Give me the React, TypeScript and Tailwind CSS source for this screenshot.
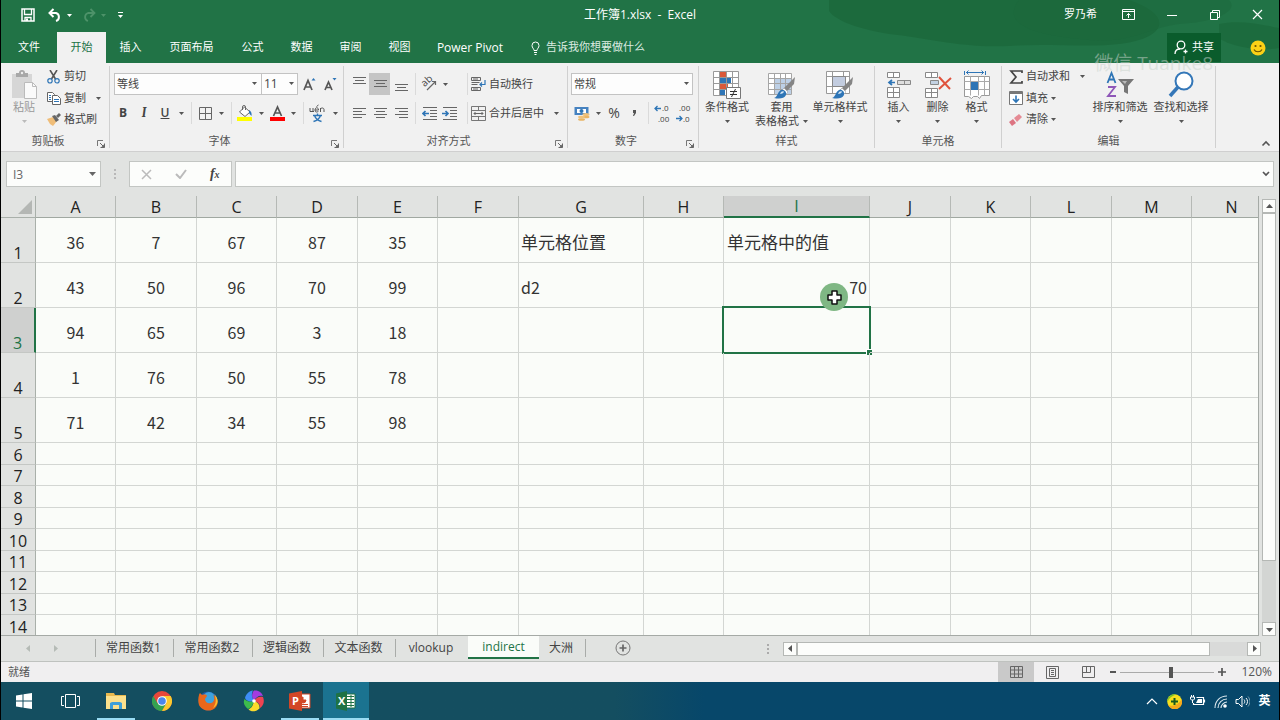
import type { ReactNode } from "react"
import clsx from "clsx"

const ribbonTabs = [
  { name: "文件", width: "w-[56px]" },
  { name: "开始", width: "w-[49px]", active: true },
  { name: "插入", width: "w-[49px]" },
  { name: "页面布局", width: "w-[73px]" },
  { name: "公式", width: "w-[49px]" },
  { name: "数据", width: "w-[49px]" },
  { name: "审阅", width: "w-[49px]" },
  { name: "视图", width: "w-[49px]" },
  { name: "Power Pivot", width: "w-[92px]" },
]

const columns = [
  { name: "A", width: "w-[80px]" },
  { name: "B", width: "w-[81px]" },
  { name: "C", width: "w-[80px]" },
  { name: "D", width: "w-[81px]" },
  { name: "E", width: "w-[80px]" },
  { name: "F", width: "w-[81px]" },
  { name: "G", width: "w-[125px]" },
  { name: "H", width: "w-[80px]" },
  { name: "I", width: "w-[146px]" },
  { name: "J", width: "w-[81px]" },
  { name: "K", width: "w-[80px]" },
  { name: "L", width: "w-[81px]" },
  { name: "M", width: "w-[80px]" },
  { name: "N", width: "" },
]

const data: Record<number, Record<string, string>> = {
  1: { A: "36", B: "7", C: "67", D: "87", E: "35", G: "单元格位置", I: "单元格中的值" },
  2: { A: "43", B: "50", C: "96", D: "70", E: "99", G: "d2", I: "70" },
  3: { A: "94", B: "65", C: "69", D: "3", E: "18" },
  4: { A: "1", B: "76", C: "50", D: "55", E: "78" },
  5: { A: "71", B: "42", C: "34", D: "55", E: "98" },
}

const rows = Array.from({ length: 14 }, (_, i) => i + 1)

const sheetTabs = [
  { name: "常用函数1", width: "w-[78px]" },
  { name: "常用函数2", width: "w-[79px]" },
  { name: "逻辑函数", width: "w-[71px]" },
  { name: "文本函数", width: "w-[72px]" },
  { name: "vlookup", width: "w-[73px]" },
  { name: "indirect", width: "w-[71px]", active: true },
  { name: "大洲", width: "w-[46px]" },
]

function Svg({ w, h, children, className }: { w: number; h: number; children: ReactNode; className?: string }) {
  return (
    <svg width={w} height={h} viewBox={`0 0 ${w} ${h}`} fill="none" className={clsx("shrink-0", className)} aria-hidden="true">
      {children}
    </svg>
  )
}

function Caret({ className = "text-[#555]" }: { className?: string }) {
  return (
    <Svg w={5} h={3} className={className}>
      <path d="M0 0h5L2.500 3z" fill="currentColor" />
    </Svg>
  )
}

function CaretButton({ label }: { label: string }) {
  return (
    <button aria-label={label} className="flex h-full w-3 items-center justify-center">
      <Caret />
    </button>
  )
}

function Tool({ label, width = "w-5", active, children }: { label: string; width?: string; active?: boolean; children: ReactNode }) {
  return (
    <button aria-label={label} className={clsx("flex h-full items-center justify-center", width, active && "bg-[#c5c5c5]")}>
      {children}
    </button>
  )
}

function Sep() {
  return <span className="mr-[3px] ml-1 h-full w-px bg-[#dadada]" />
}

function Row({ children, className }: { children: ReactNode; className?: string }) {
  return <div className={clsx("flex h-[22px] items-center", className)}>{children}</div>
}

function Group({ title, width, launcher, children }: { title: string; width: string; launcher?: boolean; children: ReactNode }) {
  return (
    <section className={clsx("flex shrink-0 flex-col border-r border-[#d0d0d0]", width)}>
      <div className="flex-1">{children}</div>
      <footer className="relative flex h-[14px] items-center justify-center text-[#555]">
        <span className={clsx(launcher && "pr-[14px]")}>{title}</span>
        {launcher && (
          <button aria-label={`${title}设置`} className="absolute right-1 bottom-0">
            <Svg w={8} h={8}>
              <path d="M.5 6V.5H6" stroke="#777" />
              <path d="M3 3l3 3M7.500 3.500v4h-4" stroke="#666" />
              <path d="M4 7.500L7.500 4v3.500z" fill="#666" />
            </Svg>
          </button>
        )}
      </footer>
    </section>
  )
}

function BigButton({ label, second, width, muted, icon }: { label: string; second?: string; width: string; muted?: boolean; icon: ReactNode }) {
  return (
    <button className={clsx("flex shrink-0 flex-col items-center pt-[3px] whitespace-nowrap", width, muted && "text-[#999]")}>
      <span className="flex h-[31px] items-center">{icon}</span>
      <span className="h-[14px] leading-[14px]">{label}</span>
      <span className="flex h-[14px] items-center gap-1 leading-[14px]">
        {second}
        <Caret className={muted ? "text-[#bbb]" : "text-[#555]"} />
      </span>
    </button>
  )
}

function Lines({ rows }: { rows: [number, number, number][] }) {
  return (
    <Svg w={14} h={16}>
      {rows.map(([x1, x2, y]) => (
        <path key={y} d={`M${x1} ${y}.5H${x2}`} stroke="#666" />
      ))}
    </Svg>
  )
}

function Brush() {
  return (
    <>
      <path d="M28 7l-1 7-9 9-3-3z" fill="#858585" />
      <path d="M17 18l4 4-2 2-4-4z" fill="#fff" stroke="#999" strokeWidth=".5" />
      <path d="M14 20c3-1 6 2 5 5-2 4-7 4-12 3 4-1 3-6 7-8z" fill="#2e75b6" />
      <path d="M14 22c1-1 3-1 3 0-1 1-2 2-4 2z" fill="#d3e5f5" />
    </>
  )
}

function TitleBar() {
  return (
    <div className="relative grid h-8 grid-cols-[1fr_auto_1fr] items-center pb-[3px]">
      <div className="flex items-center pt-px">
        <button aria-label="保存" className="ml-5">
          <Svg w={14} h={14}>
            <path d="M1 1h12v12H1z" stroke="#fff" strokeWidth="1.500" />
            <path d="M3.500 1v5.500h7V1M4 13V9.500h6V13" stroke="#fff" strokeWidth="1.300" />
            <path d="M5 10.500h2V13H5z" fill="#fff" />
          </Svg>
        </button>
        <button aria-label="撤消" className="ml-[13px]">
          <Svg w={14} h={14}>
            <path d="M5.500 1L1.500 5l4 4M2 5h6a4.200 4.200 0 010 8" stroke="#fff" strokeWidth="2" />
          </Svg>
        </button>
        <span className="ml-[5px]"><Caret className="text-white" /></span>
        <button aria-label="恢复" className="ml-[10px]" disabled>
          <Svg w={14} h={14}>
            <path d="M8.500 1l4 4-4 4M12 5H6a4.200 4.200 0 000 8" stroke="#4d9269" strokeWidth="1.800" />
          </Svg>
        </button>
        <span className="ml-[5px]"><Caret className="text-[#4d9269]" /></span>
        <button aria-label="自定义快速访问工具栏" className="ml-3">
          <Svg w={5} h={6}>
            <path d="M0 .5h5" stroke="#fff" />
            <path d="M0 3h5L2.500 6z" fill="#fff" />
          </Svg>
        </button>
      </div>
      <h1 className="text-xs text-white">工作簿1.xlsx&nbsp; -&nbsp; Excel</h1>
      <div className="flex h-full items-center justify-end text-white">
        <span className="mr-[10px]">罗乃希</span>
        <button aria-label="功能区显示选项" className="flex w-[43px] justify-center">
          <Svg w={13} h={11}>
            <path d="M.5.5h12v10H.5zM.5 2.500h12" stroke="#fff" />
            <path d="M6.500 9V4.500M4.500 6.500l2-2 2 2" stroke="#fff" />
          </Svg>
        </button>
        <button aria-label="最小化" className="flex w-[43px] justify-center">
          <Svg w={10} h={10}><path d="M0 5.500h10" stroke="#fff" /></Svg>
        </button>
        <button aria-label="向下还原" className="flex w-[43px] justify-center">
          <Svg w={10} h={10}><path d="M2.500 2V.5h7v7H8M.5 2.500h7v7h-7z" stroke="#fff" /></Svg>
        </button>
        <button aria-label="关闭" className="flex w-[43px] justify-center">
          <Svg w={11} h={11}><path d="M1 1l9 9M10 1l-9 9" stroke="#fff" strokeWidth="1.200" /></Svg>
        </button>
      </div>
    </div>
  )
}

function RibbonTabs() {
  return (
    <nav className="flex h-[31px] items-stretch text-white">
      {ribbonTabs.map((tab) => (
        <button
          key={tab.name}
          className={clsx("shrink-0", tab.width, tab.active && "bg-[#f1f1f1] text-[#217346]", tab.name === "Power Pivot" && "text-xs")}
        >
          {tab.name}
        </button>
      ))}
      <label className="ml-[15px] flex flex-1 items-center gap-[6px]">
        <Svg w={9} h={14}>
          <path d="M3 9.500C3 7.500 1 7 1 4.500a3.500 3.500 0 017 0C8 7 6 7.500 6 9.500zM3 11.500h3M3.500 13.500h2" stroke="#fff" />
        </Svg>
        <input className="w-32 text-white outline-none placeholder:text-[#dcebe2]" placeholder="告诉我你想要做什么" aria-label="告诉我你想要做什么" />
      </label>
      <button className="mt-px mb-px mr-[29px] flex w-[54px] items-center justify-center gap-1 bg-[#0a5c2c]">
        <Svg w={14} h={15}>
          <circle cx="7" cy="5" r="3.800" stroke="#fff" strokeWidth="1.300" />
          <path d="M1 14c0-3 2-5 5-5M9.500 11.500h4M11.500 9.500v4" stroke="#fff" strokeWidth="1.300" />
        </Svg>
        共享
      </button>
      <button aria-label="反馈" className="mr-[13px]">
        <Svg w={16} h={16}>
          <circle cx="8" cy="8" r="7.500" fill="#fcd116" />
          <circle cx="5.500" cy="6" r="1.100" fill="#6b5300" />
          <circle cx="10.500" cy="6" r="1.100" fill="#6b5300" />
          <path d="M4 9.500c1.500 3 6.500 3 8 0" stroke="#6b5300" strokeWidth="1.200" />
        </Svg>
      </button>
    </nav>
  )
}

function ClipboardGroup() {
  return (
    <Group title="剪贴板" width="w-[109px]" launcher>
      <div className="flex">
        <BigButton
          label="粘贴"
          width="w-[46px]"
          muted
          icon={
            <Svg w={28} h={30}>
              <path d="M2 4h20v24H2z" fill="#d6d6d6" />
              <path d="M6 3h3a3 3 0 016 0h3v4H6z" fill="#a8a8a8" />
              <circle cx="12" cy="3" r="1.200" fill="#eee" />
              <path d="M14.500 12.500h8l4 4v12h-12z" fill="#fafafa" stroke="#bbb" />
              <path d="M22.500 12.500v4h4" stroke="#bbb" />
            </Svg>
          }
        />
        <div className="flex flex-1 flex-col">
          <button className="flex h-[21px] items-center gap-1">
            <Svg w={13} h={14}>
              <path d="M3 0l5.500 9M10 0L4.500 9" stroke="#555" strokeWidth="1.600" />
              <circle cx="3" cy="10.800" r="2.200" stroke="#2e75b6" strokeWidth="1.200" />
              <circle cx="10" cy="10.800" r="2.200" stroke="#2e75b6" strokeWidth="1.200" />
            </Svg>
            剪切
          </button>
          <div className="flex h-[22px] items-center justify-between">
            <button className="flex items-center gap-[3px]">
              <Svg w={14} h={13}>
                <path d="M.5.5h5l2 2v7h-7z" fill="#fff" stroke="#666" />
                <path d="M5.500 3.500h5l3 3v6h-8z" fill="#fff" stroke="#666" />
                <path d="M2 3.500h2M2 5.500h2M2 7.500h2M7 7.500h5M7 9.500h5" stroke="#2e75b6" />
              </Svg>
              复制
            </button>
            <span className="mr-2"><Caret /></span>
          </div>
          <button className="flex h-[21px] items-center gap-[3px]">
            <Svg w={14} h={13}>
              <path d="M0 6l6-2 4 4-4 5-3-2z" fill="#efbd79" />
              <path d="M5 3l3-1 4 5-3 2z" fill="#666" />
              <path d="M9 3l3-3 2 2-3 3z" fill="#666" />
            </Svg>
            格式刷
          </button>
        </div>
      </div>
    </Group>
  )
}

function FontGroup() {
  return (
    <Group title="字体" width="w-[234px]" launcher>
      <div className="flex flex-col gap-[7px] pt-[7px]">
        <Row className="pl-1">
          <div className="relative h-full w-[148px]">
            <select aria-label="字体" className="h-full w-full appearance-none border border-[#c3c3c3] bg-[#fdfdfd] pl-[2px]">
              <option>等线</option>
            </select>
            <span className="pointer-events-none absolute top-[9px] right-[5px]"><Caret /></span>
          </div>
          <div className="relative -ml-px h-full w-[37px]">
            <select aria-label="字号" className="h-full w-full appearance-none border border-[#c3c3c3] bg-[#fdfdfd] pl-[2px] text-xs">
              <option>11</option>
            </select>
            <span className="pointer-events-none absolute top-[9px] right-[4px]"><Caret /></span>
          </div>
          <Tool label="增大字号" width="w-[22px]">
            <Svg w={13} h={14}>
              <path d="M1 13L5 3.500 9 13M2.500 10h5" stroke="#555" strokeWidth="1.700" />
              <path d="M8.500 3.500L10.500 1l2 2.500z" fill="#2e75b6" />
            </Svg>
          </Tool>
          <Tool label="减小字号" width="w-[21px]">
            <Svg w={13} h={14}>
              <path d="M1 13L4.500 5 8 13M2.500 10.500h4" stroke="#555" strokeWidth="1.700" />
              <path d="M8.500 1L10.500 3.500l2-2.500z" fill="#2e75b6" />
            </Svg>
          </Tool>
        </Row>
        <Row className="pl-[3px]">
          <Tool label="加粗"><b className="text-xs">B</b></Tool>
          <Tool label="倾斜" width="w-[22px]"><i className="font-serif text-[13px] font-bold">I</i></Tool>
          <Tool label="下划线"><u className="text-xs font-semibold">U</u></Tool>
          <CaretButton label="下划线选项" />
          <Sep />
          <Tool label="边框">
            <Svg w={13} h={13}>
              <path d="M.5.5h12v12H.5zM6.500.5v12M.5 6.500h12" stroke="#666" />
            </Svg>
          </Tool>
          <CaretButton label="边框选项" />
          <Sep />
          <Tool label="填充颜色">
            <Svg w={16} h={16}>
              <path d="M7.500 2L13 7l-5 4.500L2.500 7z" fill="#fff" stroke="#666" />
              <path d="M5.500 5V2a1.500 1.500 0 013 0v3" stroke="#666" />
              <path d="M12 5c2 1 3 3 2.500 6-1-1-2-2-2.500-3z" fill="#2e75b6" />
              <path d="M0 12h15v4H0z" fill="#ff0" />
            </Svg>
          </Tool>
          <CaretButton label="填充颜色选项" />
          <Tool label="字体颜色">
            <Svg w={15} h={16}>
              <path d="M3.500 11L7.500 2l4 9M5 8h5" stroke="#555" strokeWidth="1.700" />
              <path d="M0 12h15v4H0z" fill="#f00" />
            </Svg>
          </Tool>
          <CaretButton label="字体颜色选项" />
          <Sep />
          <Tool label="拼音" width="w-[22px]">
            <Svg w={18} h={20}>
              <path d="M1 5v3.500h3V5M4 8.500h1" stroke="#555" />
              <path d="M6 7h3.500c0-3-3.500-3-3.500 0s3 2 3.500 1M7.500 3.500L9.500 2M11.500 9V5M11.500 6.500c0-2 3.500-2 3.500 0V9" stroke="#555" />
              <path d="M8.500 10.500v2M4 12.500h9M5.500 12.500c1 3 3 5 7 6M11.500 12.500c-1 3-3 5-7 6" stroke="#2e75b6" strokeWidth="1.400" />
            </Svg>
          </Tool>
          <CaretButton label="拼音选项" />
        </Row>
      </div>
    </Group>
  )
}

function AlignGroup() {
  return (
    <Group title="对齐方式" width="w-[224px]" launcher>
      <div className="flex flex-col gap-[7px] pt-[7px]">
        <Row className="pl-[4px]">
          <Tool label="顶端对齐" width="w-[21px]"><Lines rows={[[1, 14, 1], [3, 12, 4], [1, 14, 7]]} /></Tool>
          <Tool label="垂直居中" width="w-[21px]" active><Lines rows={[[1, 14, 4], [3, 12, 7], [1, 14, 10]]} /></Tool>
          <Tool label="底端对齐" width="w-[21px]"><Lines rows={[[1, 14, 8], [3, 12, 11], [1, 14, 14]]} /></Tool>
          <Sep />
          <div className="flex h-full w-[44px]">
            <Tool label="方向">
              <Svg w={20} h={22}>
                <text x="4" y="14" fontSize="10" fill="#444" fontFamily="Open Sans" transform="rotate(-42 5 12)">ab</text>
                <path d="M8 17l8-8M13 8.500h3.500V12" stroke="#666" strokeWidth="1.200" />
              </Svg>
            </Tool>
            <CaretButton label="方向选项" />
          </div>
          <Sep />
          <button className="flex items-center gap-[3px]">
            <Svg w={15} h={14}>
              <path d="M.5.5h9v3h-9zM.5 5.500h8M.5 7.500h6M.5 10.500h9v3h-9zM2 2h5M2 12h5" stroke="#666" />
              <path d="M14 3v4.500H9M11 5.500l-2 2 2 2" stroke="#2e75b6" strokeWidth="1.200" />
            </Svg>
            自动换行
          </button>
        </Row>
        <Row className="pl-[4px]">
          <Tool label="左对齐" width="w-[21px]"><Lines rows={[[1, 14, 3], [1, 10, 6], [1, 14, 9], [1, 10, 12]]} /></Tool>
          <Tool label="居中" width="w-[21px]"><Lines rows={[[1, 14, 3], [3, 12, 6], [1, 14, 9], [3, 12, 12]]} /></Tool>
          <Tool label="右对齐" width="w-[21px]"><Lines rows={[[1, 14, 3], [5, 14, 6], [1, 14, 9], [5, 14, 12]]} /></Tool>
          <Sep />
          <div className="flex h-full w-[44px]">
            <Tool label="减少缩进量">
              <Svg w={15} h={13}>
                <path d="M1 .5h14M8 3.500h7M8 6.500h7M8 9.500h7M1 12.500h14" stroke="#666" />
                <path d="M7 6.500H1M3.500 4L1 6.500 3.500 9" stroke="#2e75b6" strokeWidth="1.700" />
              </Svg>
            </Tool>
            <Tool label="增加缩进量">
              <Svg w={15} h={13}>
                <path d="M1 .5h14M8 3.500h7M8 6.500h7M8 9.500h7M1 12.500h14" stroke="#666" />
                <path d="M0 6.500h6M3.500 4L6 6.500 3.500 9" stroke="#2e75b6" strokeWidth="1.700" />
              </Svg>
            </Tool>
          </div>
          <Sep />
          <button className="flex items-center gap-[3px]">
            <Svg w={15} h={15}>
              <path d="M.5.5h14v14H.5zM.5 4.500h14M.5 10.500h14M7.500.5v4M7.500 10.500v4" stroke="#777" />
              <path d="M3 7.500h9M4.500 6L3 7.500 4.500 9M10.500 6L12 7.500 10.500 9" stroke="#666" />
            </Svg>
            合并后居中
          </button>
          <span className="ml-[6px] flex h-full"><CaretButton label="合并选项" /></span>
        </Row>
      </div>
    </Group>
  )
}

function NumberGroup() {
  return (
    <Group title="数字" width="w-[131px]" launcher>
      <div className="flex flex-col gap-[7px] pt-[7px]">
        <Row className="pl-[3px]">
          <div className="relative h-full w-[122px]">
            <select aria-label="数字格式" className="h-full w-full appearance-none border border-[#c3c3c3] bg-[#fdfdfd] pl-[2px]">
              <option>常规</option>
            </select>
            <span className="pointer-events-none absolute top-[9px] right-[4px]"><Caret /></span>
          </div>
        </Row>
        <Row className="pl-[4px]">
          <Tool label="会计数字格式">
            <Svg w={16} h={15}>
              <path d="M.5 1h14v8H.5z" fill="#4682c0" />
              <path d="M3 3h9v4H3z" fill="#fff" />
              <circle cx="7.500" cy="5" r="2" fill="#2e75b6" />
              <ellipse cx="12" cy="8.500" rx="3.500" ry="1.500" fill="#f0c27b" />
              <ellipse cx="12" cy="11" rx="3.500" ry="1.300" fill="#e9b566" />
              <ellipse cx="7.500" cy="11" rx="3.500" ry="1.300" fill="#f0c27b" />
              <ellipse cx="7.500" cy="13.500" rx="3.500" ry="1.300" fill="#e9b566" />
            </Svg>
          </Tool>
          <CaretButton label="会计数字格式选项" />
          <Tool label="百分比样式"><span className="text-sm">%</span></Tool>
          <Tool label="千位分隔样式">
            <Svg w={5} h={8}><path d="M1 1h3v3L2 7H1l1-3H1z" fill="#555" /></Svg>
          </Tool>
          <Sep />
          <Tool label="增加小数位数">
            <Svg w={18} h={22}>
              <text x="9" y="9" fontSize="8" fill="#444" fontFamily="Open Sans">.0</text>
              <text x="5" y="20" fontSize="8" fill="#444" fontFamily="Open Sans">.00</text>
              <path d="M8 6.500H2M4.500 4L2 6.500 4.500 9" stroke="#2e75b6" strokeWidth="1.300" />
            </Svg>
          </Tool>
          <Tool label="减少小数位数" width="w-[22px]">
            <Svg w={18} h={22}>
              <text x="5" y="9" fontSize="8" fill="#444" fontFamily="Open Sans">.00</text>
              <text x="9" y="20" fontSize="8" fill="#444" fontFamily="Open Sans">.0</text>
              <path d="M2 16.500h6M5.500 14L8 16.500 5.500 19" stroke="#2e75b6" strokeWidth="1.300" />
            </Svg>
          </Tool>
        </Row>
      </div>
    </Group>
  )
}

function StylesGroup() {
  return (
    <Group title="样式" width="w-[176px]">
      <div className="flex">
        <BigButton
          label="条件格式"
          width="w-[56px]"
          icon={
            <Svg w={30} h={30}>
              <path d="M1.500 1.500h25v24h-25z" fill="#fff" />
              <path d="M8 2h6v5H8z" fill="#d9593a" />
              <path d="M8 8h11v5H8z" fill="#2e75b6" />
              <path d="M8 14h8v5H8z" fill="#d9593a" />
              <path d="M8 20h5v5H8z" fill="#2e75b6" />
              <path d="M1.500 1.500h25v24h-25zM7.500 1.500v24M14.500 1.500v24M20.500 1.500v24M1.500 7.500h25M1.500 13.500h25M1.500 19.500h25" stroke="#999" />
              <path d="M14.500 17.500h14v11h-14z" fill="#fff" stroke="#777" />
              <path d="M18 21.500h7M18 24.500h7M23.500 19l-4 8" stroke="#333" />
            </Svg>
          }
        />
        <BigButton
          label="套用"
          second="表格格式"
          width="w-[53px]"
          icon={
            <Svg w={30} h={30}>
              <path d="M1.500 3.500h23v21h-23z" fill="#fff" />
              <path d="M7 9h17v15H7z" fill="#bdd0e6" />
              <path d="M1.500 3.500h23v21h-23zM7.500 3.500v21M13.500 3.500v21M18.500 3.500v21M1.500 8.500h23M1.500 13.500h23M1.500 19.500h23" stroke="#a5a5a5" />
              <Brush />
            </Svg>
          }
        />
        <BigButton
          label="单元格样式"
          width="w-[64px]"
          icon={
            <Svg w={30} h={30}>
              <path d="M1.500 1.500h23v22h-23z" fill="#fff" />
              <path d="M1.500 1.500h23v22h-23zM7.500 1.500v22M18.500 1.500v22M1.500 6.500h23M1.500 16.500h23" stroke="#999" />
              <path d="M7.500 6.500h13v10h-13z" fill="#c3cde0" stroke="#888" />
              <Brush />
            </Svg>
          }
        />
      </div>
    </Group>
  )
}

function CellsGroup() {
  return (
    <Group title="单元格" width="w-[127px]">
      <div className="flex pl-1">
        <BigButton
          label="插入"
          width="w-[39px]"
          icon={
            <Svg w={26} h={28}>
              <path d="M1.500 1.500h12v5h-12zM7.500 1.500v5M1.500 16.500h12v10h-12zM7.500 16.500v10M1.500 21.500h12" fill="#fff" stroke="#888" />
              <path d="M11.500 9.500h13v4h-13zM18.500 9.500v4" fill="#ddd" stroke="#888" />
              <path d="M9 11.500H3M6 9l-3 2.500L6 14" stroke="#2e75b6" strokeWidth="1.700" />
            </Svg>
          }
        />
        <BigButton
          label="删除"
          width="w-[39px]"
          icon={
            <Svg w={28} h={28}>
              <path d="M1.500 1.500h12v5h-12zM7.500 1.500v5M1.500 17.500h12v9h-12zM7.500 17.500v9M1.500 21.500h12" fill="#fff" stroke="#888" />
              <path d="M6.500 9.500h8v4h-8z" fill="#c3d2e3" stroke="#888" />
              <path d="M15 6l11 12M27 7L15 18" stroke="#e0533d" strokeWidth="2" />
            </Svg>
          }
        />
        <BigButton
          label="格式"
          width="w-[39px]"
          icon={
            <Svg w={28} h={30}>
              <path d="M1.500 1v4M22.500 1v4M3 2.500h18M5.500.5l-2 2 2 2M18.500.5l2 2-2 2" stroke="#2e75b6" />
              <path d="M1.500 6.500h25v19h-8l-2 3-2-2h-4l-2 2-3-2h-4z" fill="#fff" stroke="#999" />
              <path d="M7.500 6.500v19M15.500 6.500v19M21.500 6.500v19M1.500 11.500h25M1.500 19.500h25" stroke="#aaa" />
              <path d="M8 12h7v8H8z" fill="#2e75b6" />
            </Svg>
          }
        />
      </div>
    </Group>
  )
}

function EditGroup() {
  return (
    <Group title="编辑" width="w-[214px]">
      <div className="flex">
        <div className="flex w-[88px] flex-col pl-[7px]">
          <button className="flex h-[21px] items-center gap-[3px]">
            <Svg w={14} h={14}>
              <path d="M13 3V1H2l5 6-5 6h11v-2" stroke="#444" strokeWidth="1.700" />
            </Svg>
            自动求和
            <span className="ml-[7px]"><Caret /></span>
          </button>
          <button className="flex h-[22px] items-center gap-[3px]">
            <Svg w={14} h={14}>
              <path d="M.5.5h13v13H.5z" fill="#fff" stroke="#777" />
              <path d="M1 1h12v2H1z" fill="#777" />
              <path d="M7 4.500V11M4 8l3 3 3-3" stroke="#2e75b6" strokeWidth="1.600" />
            </Svg>
            填充
            <Caret />
          </button>
          <button className="flex h-[21px] items-center gap-[3px]">
            <Svg w={14} h={12}>
              <path d="M5 4l5-4 3 3-5 5z" fill="#e58a94" />
              <path d="M4 5l3 4-4 3-3-4z" fill="#dd7482" />
            </Svg>
            清除
            <Caret />
          </button>
        </div>
        <BigButton
          label="排序和筛选"
          width="w-[60px]"
          icon={
            <Svg w={28} h={28}>
              <path d="M1.500 12L5.500 2l4 10M3 8.500h5" stroke="#2e75b6" strokeWidth="1.800" />
              <path d="M2 16h7L2 25h8" stroke="#8f57b8" strokeWidth="1.800" />
              <path d="M12 8h16l-6 7v8l-4-2v-6z" fill="#777" />
              <path d="M16 10h5l-2 3z" fill="#bbb" />
            </Svg>
          }
        />
        <BigButton
          label="查找和选择"
          width="w-[62px]"
          icon={
            <Svg w={28} h={28}>
              <circle cx="17" cy="10" r="8.500" fill="#fff" stroke="#3477b8" strokeWidth="2" />
              <path d="M11 16l-8 9" stroke="#3477b8" strokeWidth="3.500" />
            </Svg>
          }
        />
      </div>
    </Group>
  )
}

function Ribbon() {
  return (
    <div className="flex h-[89px] shrink-0 overflow-hidden border-b border-[#cfcfcf] bg-[#f1f1f1] py-[3px]">
      <ClipboardGroup />
      <FontGroup />
      <AlignGroup />
      <NumberGroup />
      <StylesGroup />
      <CellsGroup />
      <EditGroup />
      <div className="flex flex-1 items-end justify-end pr-2 pb-px">
        <button aria-label="折叠功能区">
          <Svg w={10} h={7}><path d="M1.500 5.500L5 2l3.500 3.500" stroke="#555" strokeWidth="1.600" /></Svg>
        </button>
      </div>
    </div>
  )
}

function FormulaBar() {
  return (
    <div className="flex h-[44px] shrink-0 items-start bg-[#e1e3e1] pt-[9px] pr-[5px] pl-[5px]">
      <div className="relative h-[26px] w-[95px]">
        <input aria-label="名称框" defaultValue="I3" className="h-full w-full border border-[#c3c6c3] bg-[#fcfdfb] pl-[6px] text-xs text-[#666]" />
        <Svg w={7} h={4} className="absolute top-[11px] right-[5px]"><path d="M0 0h7L3.500 4z" fill="#666" /></Svg>
      </div>
      <Svg w={28} h={26}>
        <path d="M14 8v2M14 12v2M14 16v2" stroke="#aaa" strokeWidth="1.500" />
      </Svg>
      <div className="flex h-[26px] w-[103px] items-center justify-around border border-[#c3c6c3] bg-[#fcfdfb]">
        <button aria-label="取消">
          <Svg w={11} h={11}><path d="M1 1l9 9M10 1l-9 9" stroke="#bbb" strokeWidth="1.500" /></Svg>
        </button>
        <button aria-label="输入">
          <Svg w={12} h={10}><path d="M1 5l4 4 6-8" stroke="#bbb" strokeWidth="2" /></Svg>
        </button>
        <button aria-label="插入函数" className="font-['Liberation_Serif',serif] text-sm font-bold italic">
          f<span className="text-[10px]">x</span>
        </button>
      </div>
      <div className="relative ml-[3px] h-[26px] flex-1">
        <input aria-label="编辑栏" className="h-full w-full border border-[#c3c6c3] bg-[#fcfdfb] px-2" />
        <Svg w={8} h={6} className="absolute top-[10px] right-1"><path d="M1 1l3 3 3-3" stroke="#555" strokeWidth="1.700" /></Svg>
      </div>
    </div>
  )
}

function Pointer() {
  return (
    <span className="absolute top-5 right-[21px] z-10 flex size-7 items-center justify-center rounded-full bg-[#7fb784]">
      <Svg w={15} h={15}>
        <path d="M5 1h5v4h4v5h-4v4H5v-4H1V5h4z" fill="#fff" stroke="#111" strokeWidth="1.500" strokeLinejoin="round" />
      </Svg>
    </span>
  )
}

function Grid() {
  return (
    <div className="min-w-0 flex-1 overflow-hidden border-r border-b border-[#a5aaa6] bg-[#fafcf9]">
      {/* the last column runs past the visible edge */}
      <table className="w-[calc(100%+14px)] table-fixed border-separate border-spacing-0">
        <colgroup>
          <col className="w-[35px]" />
          {columns.map((col) => (
            <col key={col.name} className={col.width} />
          ))}
        </colgroup>
        <thead>
          <tr className="h-[22px]">
            <th aria-label="全选" className="border-r border-b border-[#a9b0aa] bg-[#e1e3e1] p-0">
              <Svg w={14} h={14} className="ml-[17px]"><path d="M14 0v14H0z" fill="#b4b7b4" /></Svg>
            </th>
            {columns.map(({ name }) => (
              <th
                key={name}
                scope="col"
                className={clsx(
                  "border-r p-0 text-base leading-5 font-normal",
                  name === "I" ? "border-b-2 border-r-[#b5b9b5] border-b-[#217346] bg-[#cfd0cf] text-[#217346]" : "border-b border-r-[#b5b9b5] border-b-[#a0a8a1] bg-[#e1e3e1] text-[#222]",
                )}
              >
                {name}
              </th>
            ))}
          </tr>
        </thead>
        <tbody>
          {rows.map((row) => (
            <tr key={row} className={row <= 5 ? "h-[45px]" : row % 2 ? "h-[21px]" : "h-[22px]"}>
              <th
                scope="row"
                className={clsx(
                  "border-b border-b-[#c4c7c4] p-0 align-bottom text-base leading-[18px] font-normal",
                  row === 3 ? "border-r-2 border-r-[#217346] bg-[#cfd0cf] text-[#217346]" : "border-r border-r-[#a9b0aa] bg-[#e1e3e1] text-[#222]",
                )}
              >
                {row}
              </th>
              {columns.map(({ name }) => (
                <td
                  key={name}
                  className={clsx(
                    "relative border-r border-b border-[#d3d6d3] px-[2px] pb-0 font-['Noto_Sans_CJK_SC',sans-serif] text-base leading-5 text-[#333]",
                    row <= 5 ? "pt-[3px]" : "pt-0",
                    name === "G" ? "text-left" : name === "I" && row > 1 ? "text-right" : name === "I" ? "pl-[3px] text-left" : "text-center",
                    row === 1 && (name === "G" || name === "I") && "text-[17px] text-[#222]",
                  )}
                >
                  {data[row]?.[name]}
                  {name === "I" && row === 2 && <Pointer />}
                  {name === "I" && row === 3 && (
                    <span className="absolute -inset-x-[2px] -inset-y-[2px] border-2 border-[#217346]">
                      <span className="absolute -right-[3px] -bottom-[3px] size-[6px] border-t border-l border-white bg-[#217346]" />
                    </span>
                  )}
                </td>
              ))}
            </tr>
          ))}
        </tbody>
      </table>
    </div>
  )
}

function ScrollArrow({ dir }: { dir: "up" | "down" | "left" | "right" }) {
  const shapes = { up: "M1 6h7L4.500 2z", down: "M1 3h7L4.500 7z", left: "M6 1v7L2 4.500z", right: "M3 1v7l4-3.500z" }
  return (
    <button aria-label={`scroll ${dir}`} className="flex size-[14px] shrink-0 items-center justify-center border border-[#b5b8b5] bg-[#fcfdfb]">
      <Svg w={9} h={9}><path d={shapes[dir]} fill="#555" /></Svg>
    </button>
  )
}

function SheetBar() {
  return (
    <div className="flex h-[26px] shrink-0 border-b border-[#bfc2bf] bg-[#e1e3e1]">
      <div className="flex w-[94px] items-center gap-[22px] pl-[25px]">
        <button aria-label="上一个工作表"><Svg w={5} h={7}><path d="M4 0v7L0 3.500z" fill="#b5bbb6" /></Svg></button>
        <button aria-label="下一个工作表"><Svg w={5} h={7}><path d="M1 0v7l4-3.500z" fill="#b5bbb6" /></Svg></button>
      </div>
      {sheetTabs.map((tab, i) => (
        <button
          key={tab.name}
          className={clsx(
            "flex shrink-0 text-xs",
            tab.width,
            tab.active ? "h-[23px] items-center justify-center border-b-2 border-[#217346] bg-[#fafcf9] text-[#217346]" : "py-[3px]",
          )}
        >
          {tab.active ? (
            tab.name
          ) : (
            <span className={clsx("flex h-[18px] w-full items-center justify-center border-[#a9aca9] pr-[2px]", !sheetTabs[i - 1]?.active && "border-l")}>
              {tab.name}
            </span>
          )}
        </button>
      ))}
      <span className="mt-[3px] h-[18px] w-px bg-[#a9aca9]" />
      <button aria-label="新工作表" className="ml-[29px] pb-px">
        <Svg w={16} h={16}>
          <circle cx="8" cy="8" r="7" stroke="#777" />
          <path d="M4.500 8h7M8 4.500v7" stroke="#666" strokeWidth="1.700" />
        </Svg>
      </button>
      <div className="flex-1" />
      <div className="flex w-[514px] items-center pr-[18px]">
        <Svg w={18} h={16}><path d="M3 3v2M3 7v2M3 11v2" stroke="#999" strokeWidth="1.500" /></Svg>
        <ScrollArrow dir="left" />
        <div className="flex h-[14px] flex-1 bg-[#d9dad9]">
          <div className="w-11/12 border border-[#b5b8b5] bg-[#fcfdfb]" />
        </div>
        <ScrollArrow dir="right" />
      </div>
    </div>
  )
}

function StatusBar() {
  return (
    <div className="flex h-5 shrink-0 items-center bg-[#f0eff0] pl-[7px] text-[#555]">
      <span className="flex-1">就绪</span>
      <button aria-label="普通" className="flex h-full w-[36px] items-center justify-center bg-[#c9c9c9]">
        <Svg w={13} h={12}><path d="M.5.5h12v11H.5zM4.500.5v11M8.500.5v11M.5 4h12M.5 8h12" stroke="#666" /></Svg>
      </button>
      <button aria-label="页面布局" className="flex w-[36px] justify-center">
        <Svg w={13} h={13}><path d="M.5.5h12v12H.5zM3.500 2.500h6v8h-6zM5 4.500h3M5 6.500h3M5 8.500h3" stroke="#666" /></Svg>
      </button>
      <button aria-label="分页预览" className="flex w-[36px] justify-center">
        <Svg w={13} h={12}><path d="M.5.5h12v11H.5zM4.500.5v6M8.500.5v6M.5 6.500h8" stroke="#666" /></Svg>
      </button>
      <button aria-label="缩小" className="ml-1"><Svg w={6} h={8}><path d="M0 4h6" stroke="#555" strokeWidth="2" /></Svg></button>
      <input
        type="range"
        aria-label="缩放"
        min={10}
        max={210}
        defaultValue={118}
        className="mx-1 h-3 w-[94px] appearance-none bg-[linear-gradient(#aaa,#aaa)] bg-[length:100%_1px] bg-center bg-no-repeat [&::-webkit-slider-thumb]:h-[11px] [&::-webkit-slider-thumb]:w-1 [&::-webkit-slider-thumb]:appearance-none [&::-webkit-slider-thumb]:bg-[#555]"
      />
      <button aria-label="放大"><Svg w={8} h={8}><path d="M0 4h8M4 0v8" stroke="#555" strokeWidth="1.700" /></Svg></button>
      <span className="mr-[7px] ml-[15px] text-xs">120%</span>
    </div>
  )
}

const apps = [
  {
    name: "开始",
    icon: (
      <Svg w={16} h={16}>
        <path d="M0 2.500l6.500-1v6H0zM7.500 1.300L16 0v7.500H7.500zM0 8.500h6.500v6l-6.500-1zM7.500 8.500H16V16l-8.500-1.300z" fill="#fff" />
      </Svg>
    ),
  },
  {
    name: "任务视图",
    icon: (
      <Svg w={19} h={14}>
        <path d="M4.500.5h10v13h-10zM3 2.500H.5v9H3M16 2.500h2.500v9H16" stroke="#fff" />
      </Svg>
    ),
  },
  {
    name: "文件资源管理器",
    open: "mx-1",
    icon: (
      <Svg w={20} h={18}>
        <path d="M0 1h8l1 2h11v13H0z" fill="#e8b94f" />
        <path d="M0 4h20v13H0z" fill="#fbe08c" />
        <path d="M4 17v-6l2-1h8l2 1v6h-3v-4H7v4z" fill="#3d9fd8" />
      </Svg>
    ),
  },
  {
    name: "Chrome",
    icon: (
      <Svg w={20} h={20}>
        <circle cx="10" cy="10" r="10" fill="#e8473a" />
        <path d="M1.300 5A10 10 0 0010 20l4.300-7.500H5.700z" fill="#34a350" />
        <path d="M10 20A10 10 0 0018.700 5H10l4.300 7.500z" fill="#fbc92f" />
        <circle cx="10" cy="10" r="4.800" fill="#fff" />
        <circle cx="10" cy="10" r="3.800" fill="#4a86ee" />
      </Svg>
    ),
  },
  {
    name: "Firefox",
    icon: (
      <Svg w={22} h={22}>
        <circle cx="11" cy="11" r="9.500" fill="#1e5ba8" />
        <circle cx="12" cy="8" r="6" fill="#3fa3dd" />
        <path d="M2 5c0-1 1-2 1-2l2 2c3-1 5 0 5 1L8 9c0 5 8 6 9 1 1-3-1-5-1-5 5 2 6 8 3 12-5 6-14 4-17-2-1-3-1-7 0-10z" fill="#e8671b" />
        <path d="M17 4c5 4 5 11-1 14 3-4 4-9 1-14z" fill="#fbc02d" />
      </Svg>
    ),
  },
  {
    name: "浏览器",
    icon: (
      <Svg w={22} h={22}>
        <path d="M11 11C8 7 9 3 11 .5 16 0 19 3 20 6c-4-1-7 1-9 5z" fill="#a43be0" />
        <path d="M11 11c2-4 6-5 9-4 2 5 0 9-3 11 0-4-2-6-6-7z" fill="#ef4351" />
        <path d="M11 11c4 1 6 4 5.500 7.500C13 22 8 22 5.500 19.500 9 18 10 15 11 11z" fill="#fbdc2c" />
        <path d="M11 11c-1 4-3 7-6 8C1 16 0 12 1.500 9c3 3 6 3 9.500 2z" fill="#3dbb4c" />
        <path d="M11 11C7 12 3 11 2 8 3 4 6 1 10 .5 8 4 9 8 11 11z" fill="#3e8df5" />
        <circle cx="11" cy="11" r="1.800" fill="#fff" />
      </Svg>
    ),
  },
  {
    name: "PowerPoint",
    open: "mx-1",
    icon: (
      <Svg w={22} h={20}>
        <path d="M11 3h10v14H11z" fill="#fff" stroke="#d24726" />
        <path d="M14 6a3 3 0 103 3h-3zM13 13.500h6M13 15.500h6" fill="#d24726" stroke="#d24726" />
        <path d="M0 2.500L13 0v20L0 17.500z" fill="#d24726" />
        <text x="3" y="14" fontSize="11" fontWeight="bold" fill="#fff" fontFamily="Open Sans">P</text>
      </Svg>
    ),
  },
  {
    name: "Excel",
    active: true,
    open: "",
    icon: (
      <Svg w={22} h={20}>
        <path d="M11 3h9v14h-9z" fill="#fff" stroke="#1f7244" />
        <path d="M12 5.500h7M12 8.500h7M12 11.500h7M12 14.500h7M16 4v12" stroke="#1f7244" />
        <path d="M1 2.500L12 0v20L1 17.500z" fill="#1f7244" />
        <text x="3" y="14" fontSize="11" fontWeight="bold" fill="#fff" fontFamily="Open Sans">X</text>
      </Svg>
    ),
  },
]

function Taskbar() {
  return (
    <footer className="flex h-[38px] shrink-0 bg-linear-to-r from-[#144e60] from-48% to-[#07476a] to-55%">
      {apps.map((app) => (
        <button key={app.name} aria-label={app.name} className={clsx("flex w-[46px] flex-col", app.active && "bg-[#1b7390]")}>
          <span className="flex w-full flex-1 items-center justify-center pt-[2px]">{app.icon}</span>
          <span className={clsx("h-[2px] self-stretch", app.open !== undefined && "bg-[#9adcf3]", app.open)} />
        </button>
      ))}
      <div className="flex flex-1 items-center justify-end pr-[3px] text-white">
        <button aria-label="显示隐藏的图标" className="flex w-[23px] justify-center">
          <Svg w={12} h={7}><path d="M1 6l5-5 5 5" stroke="#fff" strokeWidth="1.200" /></Svg>
        </button>
        <span className="flex w-[23px] justify-center">
          <Svg w={15} h={15}>
            <circle cx="7.500" cy="7.500" r="7.300" fill="#f7df1e" />
            <path d="M1 11a7.300 7.300 0 0013.500-6c-2 5-8 8-13.500 6z" fill="#f5a91c" />
            <path d="M.5 8A7 7 0 019 .5C5 2 2 4 .5 8z" fill="#7cc529" />
            <path d="M4 7.500h7M7.500 4v7" stroke="#1c5a1e" strokeWidth="2" />
          </Svg>
        </span>
        <span className="flex w-[23px] justify-center">
          <Svg w={16} h={12}>
            <path d="M6.500 2.500h7v7h-10V8M14.500 4.500v3" stroke="#fff" strokeWidth="1.200" />
            <path d="M8 4h4v4H6z" fill="#fff" />
            <path d="M1.500 0v2M3.500 0v2M.5 2h4v2l-1 1h-2l-1-1zM2.500 5v3" stroke="#fff" />
          </Svg>
        </span>
        <span className="flex w-[22px] justify-center">
          <Svg w={13} h={13}>
            <path d="M1 13C1 6 6 1 13 1M4 13c0-5 4-9 9-9M7 13c0-3 3-6 6-6" stroke="#dbe8ee" strokeWidth="1.100" />
            <circle cx="11" cy="11" r="1.800" fill="#fff" />
          </Svg>
        </span>
        <span className="flex w-[22px] justify-center">
          <Svg w={15} h={13}>
            <path d="M1 4.500h2.500L7 1v11L3.500 8.500H1z" stroke="#fff" />
            <path d="M9 4.500c1 1 1 3 0 4M11 3c2 2 2 5 0 7" stroke="#fff" />
            <path d="M13 1.500c2.500 3 2.500 7 0 10" stroke="#7d9fb0" />
          </Svg>
        </span>
        <span className="w-[23px] text-center text-xs font-bold">英</span>
      </div>
    </footer>
  )
}

export default function App() {
  return (
    <div className="flex h-screen flex-col overflow-hidden border-x border-black bg-[#e1e3e1] font-['Open_Sans','Noto_Sans_CJK_SC',sans-serif] text-[11px] text-[#444]">
      <header className="relative shrink-0 bg-[#217346]">
        <svg viewBox="0 0 450 63" className="absolute top-0 right-0 h-full w-[450px]" aria-hidden="true">
          <path d="M0 0h300c30 10 40 25 20 36-30 16-90 6-140 10-50 2-80-8-120-12C20 28-10 14 0 0z" fill="#1b683b" opacity=".8" />
          <path d="M190 0h210c10 10-10 22-50 24-30 4-50 20-90 16-50-4-90-14-70-40z" fill="#1b683b" opacity=".5" />
          <path d="M390 24c20-4 40 0 60 4v20c-20 4-50-2-60-10z" fill="#1b683b" opacity=".7" />
        </svg>
        <TitleBar />
        <div className="relative">
          <RibbonTabs />
        </div>
        <span className="pointer-events-none absolute top-[51px] right-[66px] z-10 text-[19px] leading-6 whitespace-nowrap text-[#c9d3cc]/50">微信 Tuanke8</span>
      </header>
      <Ribbon />
      <FormulaBar />
      <main className="flex min-h-0 flex-1">
        <Grid />
        <div className="flex w-[20px] flex-col items-center pt-[3px]">
          <ScrollArrow dir="up" />
          <div className="flex w-[14px] flex-1 flex-col bg-[#d3d5d3]">
            <div className="h-[85%] border border-[#b5b8b5] bg-[#fcfdfb]" />
          </div>
          <ScrollArrow dir="down" />
        </div>
      </main>
      <SheetBar />
      <StatusBar />
      <Taskbar />
    </div>
  )
}
